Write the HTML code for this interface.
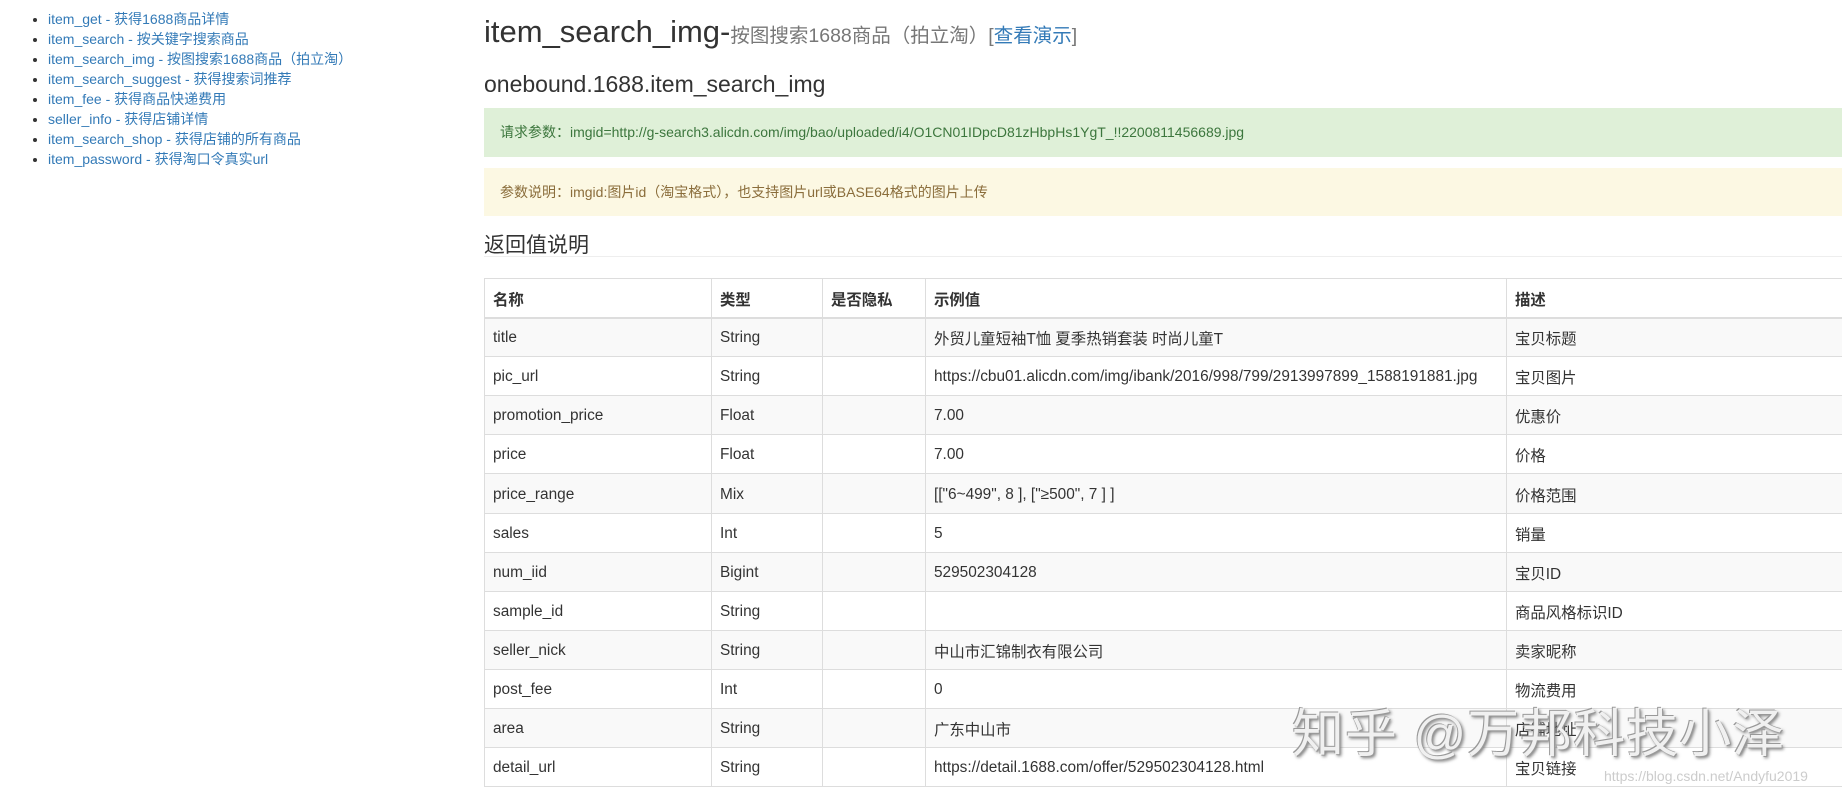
<!DOCTYPE html>
<html><head><meta charset="utf-8"><style>
*{box-sizing:border-box;margin:0;padding:0}
body{width:1842px;height:793px;overflow:hidden;background:#fff;font-family:"Liberation Sans","Noto Sans CJK SC",sans-serif;color:#333;position:relative}
a{color:#337ab7;text-decoration:none}
ul.side{position:absolute;left:48px;top:9px;list-style:disc;font-size:14px;line-height:20px;color:#333}
.main{position:absolute;left:484px;top:0;width:1358px}
h1{position:absolute;top:14px;left:0;font-weight:normal;font-size:31px;color:#333;white-space:nowrap}
h1 small{font-size:19.5px;color:#777}
h1 small a{color:#337ab7}
h2{position:absolute;top:71px;left:0;font-weight:normal;font-size:23px;white-space:nowrap}
.box{position:absolute;left:0;width:1358px;font-size:14px;padding-left:16px}
.g{top:108px;height:49px;background:#dff0d8;color:#3c763d;line-height:49px}
.y{top:168px;height:48px;background:#fcf8e3;color:#8a6d3b;line-height:48px}
h3{position:absolute;top:229px;left:0;font-weight:normal;font-size:21px}
.hr{position:absolute;top:256px;left:0;width:1358px;border-top:1px solid #eee}
table{position:absolute;top:278px;left:0;width:1370px;border-collapse:collapse;font-size:15.4px}
td,th{border:1px solid #ddd;height:39.1px;padding:2px 8px 0;text-align:left;white-space:nowrap;vertical-align:middle}
th{border-bottom:2px solid #ddd;font-weight:bold}
tbody tr:nth-child(odd){background:#f9f9f9}
.wm{position:absolute;left:1292px;top:692px;font-size:52px;color:rgba(255,255,255,.85);text-shadow:1px 1px 0 #999,-1px -1px 0 #999,2px 2px 3px #777;letter-spacing:1px;white-space:nowrap}
.csdn{position:absolute;left:1604px;top:768px;font-size:14px;color:#ccc;white-space:nowrap}
</style></head><body>
<ul class="side">
<li><a>item_get - 获得1688商品详情</a></li>
<li><a>item_search - 按关键字搜索商品</a></li>
<li><a>item_search_img - 按图搜索1688商品（拍立淘）</a></li>
<li><a>item_search_suggest - 获得搜索词推荐</a></li>
<li><a>item_fee - 获得商品快递费用</a></li>
<li><a>seller_info - 获得店铺详情</a></li>
<li><a>item_search_shop - 获得店铺的所有商品</a></li>
<li><a>item_password - 获得淘口令真实url</a></li>
</ul>
<div class="main">
<h1>item_search_img-<small>按图搜索1688商品（拍立淘）[<a>查看演示</a>]</small></h1>
<h2>onebound.1688.item_search_img</h2>
<div class="box g">请求参数：imgid=http://g-search3.alicdn.com/img/bao/uploaded/i4/O1CN01IDpcD81zHbpHs1YgT_!!2200811456689.jpg</div>
<div class="box y">参数说明：imgid:图片id（淘宝格式），也支持图片url或BASE64格式的图片上传</div>
<h3>返回值说明</h3>
<div class="hr"></div>
<table>
<colgroup><col style="width:227px"><col style="width:111px"><col style="width:103px"><col style="width:581px"><col></colgroup>
<thead><tr><th>名称</th><th>类型</th><th>是否隐私</th><th>示例值</th><th>描述</th></tr></thead>
<tbody>
<tr><td>title</td><td>String</td><td></td><td>外贸儿童短袖T恤 夏季热销套装 时尚儿童T</td><td>宝贝标题</td></tr>
<tr><td>pic_url</td><td>String</td><td></td><td>https://cbu01.alicdn.com/img/ibank/2016/998/799/2913997899_1588191881.jpg</td><td>宝贝图片</td></tr>
<tr><td>promotion_price</td><td>Float</td><td></td><td>7.00</td><td>优惠价</td></tr>
<tr><td>price</td><td>Float</td><td></td><td>7.00</td><td>价格</td></tr>
<tr><td>price_range</td><td>Mix</td><td></td><td>[["6~499", 8 ], ["≥500", 7 ] ]</td><td>价格范围</td></tr>
<tr><td>sales</td><td>Int</td><td></td><td>5</td><td>销量</td></tr>
<tr><td>num_iid</td><td>Bigint</td><td></td><td>529502304128</td><td>宝贝ID</td></tr>
<tr><td>sample_id</td><td>String</td><td></td><td></td><td>商品风格标识ID</td></tr>
<tr><td>seller_nick</td><td>String</td><td></td><td>中山市汇锦制衣有限公司</td><td>卖家昵称</td></tr>
<tr><td>post_fee</td><td>Int</td><td></td><td>0</td><td>物流费用</td></tr>
<tr><td>area</td><td>String</td><td></td><td>广东中山市</td><td>店铺地址</td></tr>
<tr><td>detail_url</td><td>String</td><td></td><td>https://detail.1688.com/offer/529502304128.html</td><td>宝贝链接</td></tr>
</tbody></table>
</div>
<div class="wm">知乎 @万邦科技小泽</div>
<div class="csdn">https://blog.csdn.net/Andyfu2019</div>
</body></html>
